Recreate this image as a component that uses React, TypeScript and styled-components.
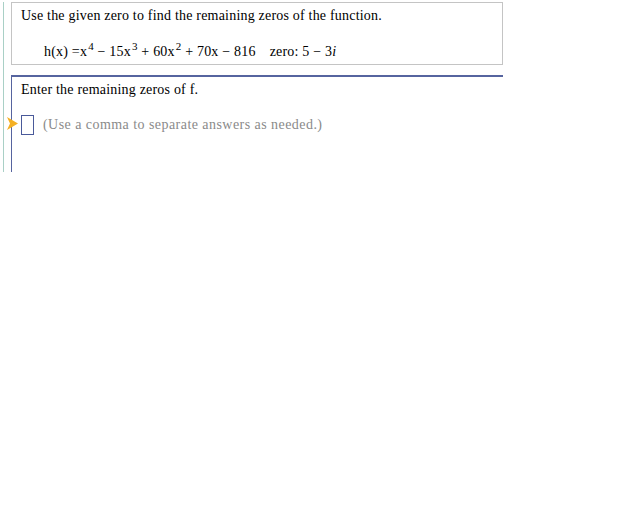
import React from "react";
import styled, { createGlobalStyle } from "styled-components";

const Global = createGlobalStyle`
  body {
    margin: 0;
    background: #fff;
    font-family: "Liberation Serif", "Times New Roman", serif;
    color: #000;
  }
`;

const Frame = styled.div`
  margin-left: 3px;
  width: 500px;
  border-left: 1px solid #a9d0c6;
  padding-left: 7px;
`;

const QuestionBox = styled.div`
  margin-top: 2px;
  width: 492px;
  height: 63px;
  border: 1px solid #c4c4c4;
  padding-left: 9px;
  box-sizing: border-box;
`;

const Line = styled.div<{ indent?: number; top?: number }>`
  font-size: 14px;
  line-height: 16px;
  letter-spacing: 0.2px;
  padding-left: ${(p) => p.indent ?? 0}px;
  margin-top: ${(p) => p.top ?? 0}px;
  white-space: nowrap;
`;

const Sup = styled.sup`
  font-size: 11px;
  line-height: 0;
  vertical-align: 6px;
  margin-left: 1px;
`;

const Gap = styled.span<{ w: number }>`
  display: inline-block;
  width: ${(p) => p.w}px;
`;

const AnswerBox = styled.div`
  margin-top: 10px;
  width: 492px;
  height: 97px;
  border-top: 2px solid #56649f;
  border-left: 1px solid #56649f;
  padding-left: 9px;
  box-sizing: border-box;
  position: relative;
`;

const InputRow = styled.div`
  display: flex;
  align-items: center;
  margin-top: 17px;
  gap: 9px;
  font-size: 14px;
`;

const Pointer = styled.svg`
  position: absolute;
  left: -5px;
  top: 40px;
`;

const Field = styled.div`
  width: 11px;
  height: 18px;
  border: 1px solid #4a5a9a;
  background: #fff;
`;

const Hint = styled.span`
  color: #8a8a8a;
  letter-spacing: 0.45px;
  white-space: nowrap;
`;

export default function App() {
  return (
    <>
      <Global />
      <Frame>
        <QuestionBox>
          <Line top={5}>Use the given zero to find the remaining zeros of the function.</Line>
          <Line indent={23} top={20}>
            h(x) =x<Sup>4</Sup> − 15x<Sup>3</Sup> + 60x<Sup>2</Sup> + 70x − 816<Gap w={14} />zero: 5 − 3<i>i</i>
          </Line>
        </QuestionBox>
        <AnswerBox>
          <Line top={5}>Enter the remaining zeros of f.</Line>
          <Pointer width="11" height="13" viewBox="0 0 11 13">
            <path d="M0 0 L11 6.5 L0 13 L3 6.5 Z" fill="#f4b024" />
          </Pointer>
          <InputRow>
            <Field />
            <Hint>(Use a comma to separate answers as needed.)</Hint>
          </InputRow>
        </AnswerBox>
      </Frame>
    </>
  );
}
